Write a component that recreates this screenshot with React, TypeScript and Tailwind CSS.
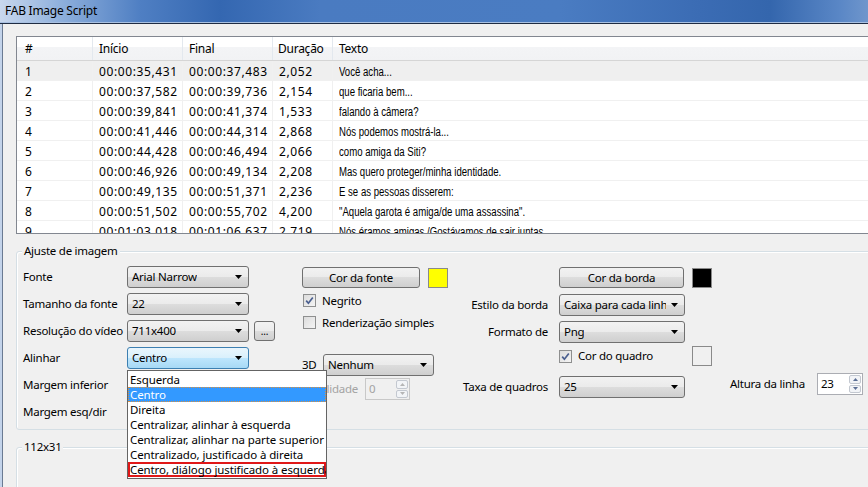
import type { ReactNode } from 'react'

const rows = [
    ['1', '00:00:35,431', '00:00:37,483', '2,052', 'Você acha...'],
    ['2', '00:00:37,582', '00:00:39,736', '2,154', 'que ficaria bem...'],
    ['3', '00:00:39,841', '00:00:41,374', '1,533', 'falando à câmera?'],
    ['4', '00:00:41,446', '00:00:44,314', '2,868', 'Nós podemos mostrá-la...'],
    ['5', '00:00:44,428', '00:00:46,494', '2,066', 'como amiga da Siti?'],
    ['6', '00:00:46,926', '00:00:49,134', '2,208', 'Mas quero proteger/minha identidade.'],
    ['7', '00:00:49,135', '00:00:51,371', '2,236', 'E se as pessoas disserem:'],
    ['8', '00:00:51,502', '00:00:55,702', '4,200', '"Aquela garota é amiga/de uma assassina".'],
    ['9', '00:01:03,018', '00:01:06,637', '2,719', 'Nós éramos amigas./Gostávamos de sair juntas.'],
]

const alignOptions = [
    'Esquerda',
    'Centro',
    'Direita',
    'Centralizar, alinhar à esquerda',
    'Centralizar, alinhar na parte superior',
    'Centralizado, justificado à direita',
    'Centro, diálogo justificado à esquerda',
]

const grayFill = 'border-[#707070] bg-[linear-gradient(#f2f2f2,#ebebeb_50%,#dddddd_50%,#cfcfcf)]'
const blueFill = 'border-[#3c7fb1] bg-[linear-gradient(#eaf6fd,#d9f0fc_50%,#bee6fd_50%,#a7d9f5)]'

const Arrow = () => (
    <svg width="7" height="4" viewBox="0 0 7 4" className="absolute right-[6px] top-1/2 -translate-y-1/2">
        <path d="M0 0h7L3.5 4z" fill="#000" />
    </svg>
)

const Combo = ({ value, className = '', focused = false }: { value: string; className?: string; focused?: boolean }) => (
    <div
        className={`relative flex shrink-0 items-center rounded-[3px] border pl-[4px] pr-[18px] ${
            focused ? blueFill : grayFill
        } ${className}`}
    >
        <span className="overflow-hidden whitespace-nowrap">{value}</span>
        <Arrow />
    </div>
)

const Button = ({ children, className = '' }: { children: ReactNode; className?: string }) => (
    <div className={`flex shrink-0 items-center justify-center rounded-[3px] border ${grayFill} ${className}`}>{children}</div>
)

const Swatch = ({ color }: { color: string }) => (
    <div className={`h-[20px] w-[20px] shrink-0 border border-[#8a8a8a] ${color}`} />
)

const Check = ({ checked, label }: { checked: boolean; label: string }) => (
    <div className="flex items-center gap-[6px] whitespace-nowrap">
        <div className="flex h-[13px] w-[13px] shrink-0 items-center justify-center border border-[#8e8f8f] bg-[linear-gradient(135deg,#dcdcdc,#f4f4f4)]">
            {checked && (
                <svg width="9" height="9" viewBox="0 0 9 9">
                    <path d="M1.2 4.6 L3.4 7.2 L7.8 1.4" fill="none" stroke="#4a5f8f" strokeWidth="1.7" />
                </svg>
            )}
        </div>
        <span>{label}</span>
    </div>
)

const Spin = ({ value, disabled = false, className = '' }: { value: string; disabled?: boolean; className?: string }) => (
    <div
        className={`flex h-[22px] shrink-0 border ${
            disabled ? 'border-[#c8c8c8] bg-[#f0f0f0] text-[#a3a3a3]' : 'border-[#abadb3] bg-white text-black'
        } ${className}`}
    >
        <div className="flex-1 pl-[3px] leading-[19px]">{value}</div>
        <div className="flex w-[13px] flex-col gap-px py-px pr-px">
            <div className="flex flex-1 items-center justify-center rounded-[2px] border border-[#c3c8d0] bg-[#f2f4f7]">
                <svg width="5" height="3" viewBox="0 0 5 3">
                    <path d="M0 3h5L2.5 0z" fill={disabled ? '#b5b5b5' : '#5a6e94'} />
                </svg>
            </div>
            <div className="flex flex-1 items-center justify-center rounded-[2px] border border-[#c3c8d0] bg-[#f2f4f7]">
                <svg width="5" height="3" viewBox="0 0 5 3">
                    <path d="M0 0h5L2.5 3z" fill={disabled ? '#b5b5b5' : '#5a6e94'} />
                </svg>
            </div>
        </div>
    </div>
)

const Row = ({ label, children }: { label: string; children?: ReactNode }) => (
    <div className="flex h-[21px] items-center">
        <span className="w-[104px] shrink-0 whitespace-nowrap">{label}</span>
        {children}
    </div>
)

const numCell = 'h-full shrink-0 border-r border-[#f0f0f0] pl-[6px] pt-px leading-[19px] tracking-[0.6px]'

const App = () => (
    <div className="relative h-[487px] w-[868px] overflow-hidden bg-[#f0f0f0] font-['Noto_Sans',sans-serif] text-[11.5px] tracking-[-0.25px] text-black">
        <div className="flex h-[22px] items-center bg-[linear-gradient(90deg,#c9d8ee_0px,#8fb0dc_60px,#4f7fc3_140px,#3467b1_220px,#4a7bc1_320px,#4a7cc2_560px,#3b6cb4_700px,#3466ad_770px,#5a87c6_840px,#6f96cc_868px)] pl-[5px] text-[12px]">
            FAB Image Script
        </div>
        <div className="h-px bg-[#a9c1e2]" />
        <div className="h-px bg-[#1f2c43]" />

        <div className="flex">
            <div className="w-[2px] shrink-0 self-stretch bg-[#c3d3ea]" />
            <div className="w-px shrink-0 self-stretch bg-[#6a7a92]" />

            <div className="flex shrink-0 flex-col pl-[13px] pt-[12px]">
                <div className="h-[198px] w-[900px] overflow-hidden border border-[#828790] bg-white">
                    <div className="flex h-[24px] items-center border-b border-[#d5d5d5] bg-[linear-gradient(#ffffff,#ffffff_45%,#f3f4f6_45%,#f1f2f4)] text-[12px]">
                        <div className="h-full w-[76px] border-r border-[#e3e8ee] pl-[8px] leading-[24px]">#</div>
                        <div className="h-full w-[90px] border-r border-[#e3e8ee] pl-[6px] leading-[24px]">Início</div>
                        <div className="h-full w-[90px] border-r border-[#e3e8ee] pl-[6px] leading-[24px]">Final</div>
                        <div className="h-full w-[60px] border-r border-[#e3e8ee] pl-[5px] leading-[24px]">Duração</div>
                        <div className="h-full flex-1 pl-[6px] leading-[24px]">Texto</div>
                    </div>
                    {rows.map((row, index) => (
                        <div
                            key={row[0]}
                            className={`flex h-[20px] items-center border-b border-[#f0f0f0] text-[12px] ${index === 0 ? 'bg-[#efefef]' : ''}`}
                        >
                            <div className="h-full w-[76px] shrink-0 border-r border-[#f0f0f0] pl-[8px] pt-px leading-[19px]">{row[0]}</div>
                            <div className={`${numCell} w-[90px]`}>{row[1]}</div>
                            <div className={`${numCell} w-[90px]`}>{row[2]}</div>
                            <div className={`${numCell} w-[60px]`}>{row[3]}</div>
                            <div className="h-full flex-1 pl-[6px] pt-px leading-[19px] tracking-normal">
                                <span className="inline-block origin-left scale-x-[0.8] whitespace-nowrap font-['Liberation_Sans',sans-serif]">
                                    {row[4]}
                                </span>
                            </div>
                        </div>
                    ))}
                </div>

                <div className="relative mt-[17px] h-[179px] w-[900px] rounded-[3px] border border-[#d5dfe5] shadow-[inset_1px_1px_0_#ffffff]">
                    <span className="absolute -top-[10px] left-[5px] bg-[#f0f0f0] px-[2px]">Ajuste de imagem</span>

                    <div className="flex pl-[6px] pt-[14px]">
                        <div className="flex w-[279px] shrink-0 flex-col gap-[6px]">
                            <Row label="Fonte">
                                <Combo value="Arial Narrow" className="h-[22px] w-[122px]" />
                            </Row>
                            <Row label="Tamanho da fonte">
                                <Combo value="22" className="h-[22px] w-[122px]" />
                            </Row>
                            <Row label="Resolução do vídeo">
                                <Combo value="711x400" className="h-[22px] w-[122px]" />
                                <Button className="ml-[5px] h-[20px] w-[21px] text-[10px] leading-none">...</Button>
                            </Row>
                            <Row label="Alinhar">
                                <div className="relative">
                                    <Combo value="Centro" focused className="h-[22px] w-[122px]" />
                                    <div className="absolute left-0 top-[23px] z-10 w-[200px] border border-[#646464] bg-white py-px tracking-[-0.1px]">
                                        {alignOptions.map((option, index) => (
                                            <div
                                                key={option}
                                                className={`h-[15px] overflow-hidden whitespace-nowrap pl-[2px] leading-[15px] ${
                                                    index === 1
                                                        ? 'bg-[#3399ff] text-white outline-1 -outline-offset-1 outline-dotted outline-[#d9903f]'
                                                        : ''
                                                } ${index === 6 ? 'ring-2 ring-inset ring-[#e01818]' : ''}`}
                                            >
                                                {option}
                                            </div>
                                        ))}
                                    </div>
                                </div>
                            </Row>
                            <Row label="Margem inferior">
                                <Spin value="10" className="w-[60px]" />
                            </Row>
                            <Row label="Margem esq/dir">
                                <Spin value="10" className="w-[60px]" />
                            </Row>
                        </div>

                        <div className="flex w-[150px] shrink-0 flex-col pt-px">
                            <div className="flex h-[21px] items-center">
                                <Button className="h-[21px] w-[118px]">Cor da fonte</Button>
                                <div className="ml-[8px]">
                                    <Swatch color="bg-[#ffff00]" />
                                </div>
                            </div>
                            <div className="mt-[6px] flex h-[13px] items-center pl-px">
                                <Check checked label="Negrito" />
                            </div>
                            <div className="mt-[9px] flex h-[13px] items-center pl-px">
                                <Check checked={false} label="Renderização simples" />
                            </div>
                            <div className="mt-[25px] flex h-[22px] items-center">
                                <span className="w-[21px] shrink-0">3D</span>
                                <Combo value="Nenhum" className="h-[22px] w-[111px]" />
                            </div>
                            <div className="mt-[2px] flex h-[22px] items-center">
                                <span className="w-[56px] shrink-0 text-right text-[#a3a3a3]">Qualidade</span>
                                <Spin value="0" disabled className="ml-[7px] w-[45px]" />
                            </div>
                        </div>

                        <div className="flex shrink-0 flex-col pt-px">
                            <div className="flex h-[21px] items-center pl-[107px]">
                                <Button className="h-[21px] w-[125px]">Cor da borda</Button>
                                <div className="ml-[8px]">
                                    <Swatch color="bg-black" />
                                </div>
                            </div>
                            <div className="mt-[6px] flex h-[21px] items-center">
                                <span className="w-[96px] shrink-0 text-right">Estilo da borda</span>
                                <Combo value="Caixa para cada linha" className="ml-[11px] h-[22px] w-[126px]" />
                            </div>
                            <div className="mt-[6px] flex h-[21px] items-center">
                                <span className="w-[96px] shrink-0 text-right">Formato de</span>
                                <Combo value="Png" className="ml-[11px] h-[22px] w-[126px]" />
                            </div>
                            <div className="mt-[4px] flex h-[20px] items-center pl-[107px]">
                                <div className="w-[133px] shrink-0">
                                    <Check checked label="Cor do quadro" />
                                </div>
                                <Swatch color="bg-[#f0f0f0]" />
                            </div>
                            <div className="mt-[10px] flex h-[22px] items-center">
                                <span className="w-[96px] shrink-0 text-right">Taxa de quadros</span>
                                <Combo value="25" className="ml-[11px] h-[22px] w-[126px]" />
                            </div>
                        </div>

                        <div className="ml-[18px] mt-[107px] flex h-[22px] shrink-0 items-center">
                            <span className="w-[87px] shrink-0 whitespace-nowrap">Altura da linha</span>
                            <Spin value="23" className="w-[46px]" />
                        </div>
                    </div>
                </div>

                <div className="relative mt-[17px] h-[60px] w-[900px] rounded-[3px] border border-[#d5dfe5] shadow-[inset_1px_1px_0_#ffffff]">
                    <span className="absolute -top-[10px] left-[5px] bg-[#f0f0f0] px-[2px]">112x31</span>
                </div>
            </div>
        </div>
    </div>
)

export default App
